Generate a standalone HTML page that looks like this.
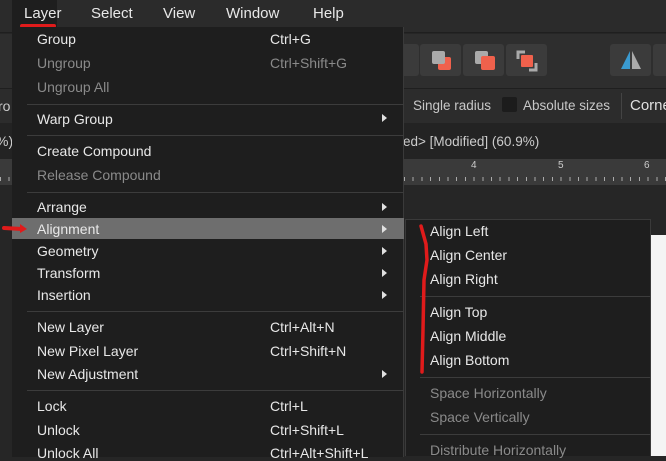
<!DOCTYPE html>
<html><head><style>
*{margin:0;padding:0;box-sizing:border-box}
body{width:666px;height:456px;overflow:hidden;background:#262626;font-family:"Liberation Sans",sans-serif;font-size:14px;color:#e8e8e8;position:relative}
.a{position:absolute;white-space:nowrap}
.d{color:#8a8a8a}
.sep{position:absolute;height:1px;background:#3c3c3c}
.arr{position:absolute;width:0;height:0;border-top:4px solid transparent;border-bottom:4px solid transparent;border-left:5px solid #e0e0e0}
.btn{position:absolute;top:44px;width:41px;height:32px;background:#3b3b3b;border-radius:3px}
</style></head><body>
<div class="a" style="left:0;top:0;width:666px;height:33px;background:#2b2b2b;border-bottom:1px solid #1f1f1f"></div>
<div class="a" style="left:12px;top:0;width:45px;height:27px;background:#1e1e1e"></div>
<div class="a" style="left:24px;top:5px;font-size:15px">Layer</div>
<div class="a" style="left:20px;top:24px;width:36px;height:4px;background:#e01b1b;border-radius:2px"></div>
<div class="a" style="left:91px;top:5px;font-size:15px">Select</div>
<div class="a" style="left:163px;top:5px;font-size:15px">View</div>
<div class="a" style="left:226px;top:5px;font-size:15px">Window</div>
<div class="a" style="left:313px;top:5px;font-size:15px">Help</div>
<div class="a" style="left:0;top:34px;width:12px;height:54px;background:#2e2e2e"></div>
<div class="a" style="left:0;top:88px;width:12px;height:35px;background:#2c2c2c;border-top:1px solid #1f1f1f"></div>
<div class="a" style="left:-2px;top:98px;color:#ccc">ro</div>
<div class="a" style="left:0;top:123px;width:12px;height:36px;background:#232323"></div>
<div class="a" style="left:-4px;top:133px;color:#ccc">%)</div>
<div class="a" style="left:0;top:159px;width:12px;height:26px;background:#3a3a3a"></div>
<div class="a" style="left:404px;top:34px;width:262px;height:54px;background:#2e2e2e"></div>
<div class="btn" style="left:378px"></div>
<div class="btn" style="left:420px"><div class="a" style="left:18px;top:13px;width:13px;height:13px;background:#f0614c;border-radius:2px"></div><div class="a" style="left:12px;top:7px;width:13px;height:13px;background:#aaa;border-radius:2px"></div></div>
<div class="btn" style="left:463px"><div class="a" style="left:12px;top:7px;width:13px;height:13px;background:#aaa;border-radius:2px"></div><div class="a" style="left:18px;top:12px;width:14px;height:14px;background:#f0614c;border-radius:2px"></div></div>
<div class="btn" style="left:506px"><svg class="a" style="left:10px;top:6px" width="22" height="22"><path d="M2 9 V2 H9" stroke="#aaa" stroke-width="3" fill="none"/><path d="M13 20 H20 V13" stroke="#aaa" stroke-width="3" fill="none"/><rect x="5" y="5" width="12" height="12" rx="1" fill="#f0614c"/></svg></div>
<div class="btn" style="left:610px"><svg class="a" style="left:9px;top:7px" width="24" height="20"><polygon points="11,0 11,18 2,18" fill="#3a9ad0"/><polygon points="13,0 13,18 22,18" fill="#aaa"/></svg></div>
<div class="btn" style="left:653px"></div>
<div class="a" style="left:404px;top:88px;width:262px;height:35px;background:#2c2c2c;border-top:1px solid #1f1f1f"></div>
<div class="a" style="left:413px;top:98px;color:#c8c8c8;font-size:13.5px">Single radius</div>
<div class="a" style="left:502px;top:97px;width:15px;height:15px;background:#1c1c1c;border-radius:2px"></div>
<div class="a" style="left:523px;top:98px;color:#c8c8c8;font-size:13.5px">Absolute sizes</div>
<div class="a" style="left:621px;top:93px;width:1px;height:26px;background:#444"></div>
<div class="a" style="left:630px;top:97px;color:#e0e0e0;font-size:15px">Corne</div>
<div class="a" style="left:404px;top:123px;width:262px;height:36px;background:#232323"></div>
<div class="a" style="left:403px;top:134px;color:#ccc;font-size:13.5px">ed&gt; [Modified] (60.9%)</div>
<div class="a" style="left:404px;top:159px;width:262px;height:26px;background:#3a3a3a"></div>
<div class="a" style="left:471px;top:160px;font-size:10px;color:#ccc">4</div>
<div class="a" style="left:558px;top:160px;font-size:10px;color:#ccc">5</div>
<div class="a" style="left:644px;top:160px;font-size:10px;color:#ccc">6</div>
<div class="a" style="left:404px;top:177px;width:262px;height:4px;background:repeating-linear-gradient(90deg,#aaa 0 1px,transparent 1px 8.7px)"></div>
<div class="a" style="left:0;top:177px;width:12px;height:4px;background:repeating-linear-gradient(90deg,#aaa 0 1px,transparent 1px 8.7px)"></div>
<div class="a" style="left:651px;top:235px;width:15px;height:221px;background:#f4f4f4"></div>
<div class="a" style="left:12px;top:27px;width:392px;height:430px;background:#1e1e1e;border-right:1px solid #3a3a3a"></div>
<div class="a" style="left:12px;top:218px;width:392px;height:21px;background:#6e6e6e"></div>
<div class="a" style="left:37px;top:31px">Group</div><div class="a" style="left:270px;top:31px">Ctrl+G</div>
<div class="a d" style="left:37px;top:55px">Ungroup</div><div class="a d" style="left:270px;top:55px">Ctrl+Shift+G</div>
<div class="a d" style="left:37px;top:79px">Ungroup All</div>
<div class="sep" style="left:27px;top:104px;width:377px"></div>
<div class="a" style="left:37px;top:111px">Warp Group</div><div class="arr" style="left:382px;top:114px"></div>
<div class="sep" style="left:27px;top:135px;width:377px"></div>
<div class="a" style="left:37px;top:143px">Create Compound</div>
<div class="a d" style="left:37px;top:167px">Release Compound</div>
<div class="sep" style="left:27px;top:192px;width:377px"></div>
<div class="a" style="left:37px;top:199px">Arrange</div><div class="arr" style="left:382px;top:203px"></div>
<div class="a" style="left:37px;top:221px">Alignment</div><div class="arr" style="left:382px;top:225px"></div>
<div class="a" style="left:37px;top:243px">Geometry</div><div class="arr" style="left:382px;top:247px"></div>
<div class="a" style="left:37px;top:265px">Transform</div><div class="arr" style="left:382px;top:269px"></div>
<div class="a" style="left:37px;top:287px">Insertion</div><div class="arr" style="left:382px;top:291px"></div>
<div class="sep" style="left:27px;top:311px;width:377px"></div>
<div class="a" style="left:37px;top:319px">New Layer</div><div class="a" style="left:270px;top:319px">Ctrl+Alt+N</div>
<div class="a" style="left:37px;top:343px">New Pixel Layer</div><div class="a" style="left:270px;top:343px">Ctrl+Shift+N</div>
<div class="a" style="left:37px;top:366px">New Adjustment</div><div class="arr" style="left:382px;top:370px"></div>
<div class="sep" style="left:27px;top:390px;width:377px"></div>
<div class="a" style="left:37px;top:398px">Lock</div><div class="a" style="left:270px;top:398px">Ctrl+L</div>
<div class="a" style="left:37px;top:422px">Unlock</div><div class="a" style="left:270px;top:422px">Ctrl+Shift+L</div>
<div class="a" style="left:37px;top:445px">Unlock All</div><div class="a" style="left:270px;top:445px">Ctrl+Alt+Shift+L</div>
<div class="a" style="left:405px;top:219px;width:246px;height:237px;background:#1e1e1e;border:1px solid #3a3a3a;border-bottom:none"></div>
<div class="a" style="left:430px;top:223px">Align Left</div>
<div class="a" style="left:430px;top:247px">Align Center</div>
<div class="a" style="left:430px;top:271px">Align Right</div>
<div class="sep" style="left:420px;top:296px;width:231px"></div>
<div class="a" style="left:430px;top:304px">Align Top</div>
<div class="a" style="left:430px;top:328px">Align Middle</div>
<div class="a" style="left:430px;top:352px">Align Bottom</div>
<div class="sep" style="left:420px;top:377px;width:231px"></div>
<div class="a d" style="left:430px;top:385px">Space Horizontally</div>
<div class="a d" style="left:430px;top:409px">Space Vertically</div>
<div class="sep" style="left:420px;top:434px;width:231px"></div>
<div class="a d" style="left:430px;top:442px">Distribute Horizontally</div>
<svg class="a" style="left:0;top:0" width="666" height="456">
<path d="M4 228 L22 229" stroke="#e01b1b" stroke-width="4" stroke-linecap="round" fill="none"/>
<polygon points="20,224 27,229 20,233" fill="#e01b1b"/>
<path d="M421 226 L426 244 L427 260 L424 280 L423 330 L422 372" stroke="#e01b1b" stroke-width="3.5" stroke-linecap="round" fill="none"/>
</svg>
</body></html>
